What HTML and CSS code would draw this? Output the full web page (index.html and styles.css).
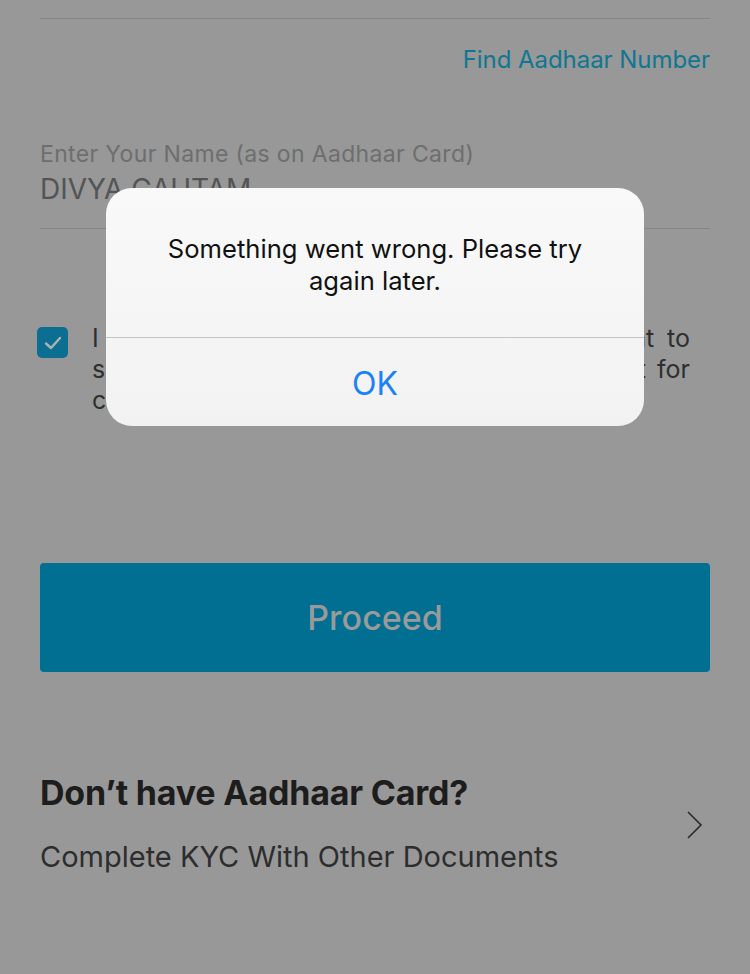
FILE: index.html
```html
<!DOCTYPE html>
<html>
<head>
<meta charset="utf-8">
<link rel="stylesheet" href="styles.css">
</head>
<body>
<div class="page">
  <div class="rule top-rule"></div>
  <div class="find-row"><span class="find-link">Find Aadhaar Number</span></div>
  <div class="field">
    <div class="field-label">Enter Your Name (as on Aadhaar Card)</div>
    <div class="field-value">DIVYA GAUTAM</div>
  </div>
  <div class="rule"></div>
  <div class="consent">
    <div class="checkbox">
      <svg width="20" height="16" viewBox="0 0 20 16"><path d="M3 8.5 L8 13 L17 3" fill="none" stroke="#a9b3b8" stroke-width="2.4" stroke-linecap="round" stroke-linejoin="round"/></svg>
    </div>
    <div class="consent-text">
      <div class="cline">I give Paytm Payments Bank Ltd my consent to</div>
      <div class="cline">share all of my details with UIDAI on request for</div>
      <div class="cline last">completing my KYC.</div>
    </div>
  </div>
  <div class="btn">Proceed</div>
  <div class="alt-row">
    <div class="alt-text">
      <div class="alt-title">Don’t have Aadhaar Card?</div>
      <div class="alt-sub">Complete KYC With Other Documents</div>
    </div>
    <svg class="chev" width="18" height="28" viewBox="0 0 18 28"><path d="M2 1 L15 14 L2 27" fill="none" stroke="#2a2a2a" stroke-width="1.6"/></svg>
  </div>
</div>

<div class="alert">
  <div class="alert-msg">Something went wrong. Please try again later.</div>
  <div class="alert-btn">OK</div>
</div>
</body>
</html>
```
FILE: styles.css
```css
html, body {
  margin: 0;
  padding: 0;
  background: #989898;
  width: 750px;
  height: 974px;
  overflow: hidden;
  font-family: Inter, Roboto, "Liberation Sans", sans-serif;
}
.page {
  padding: 0 40px;
  position: relative;
}
.rule {
  height: 1px;
  background: #868686;
}
.top-rule {
  margin-top: 18px;
}
.find-row {
  display: flex;
  justify-content: flex-end;
  margin-top: 26px;
  height: 30px;
  line-height: 30px;
}
.find-link {
  color: #0f7792;
  font-size: 24px;
  letter-spacing: -0.05px;
}
.field {
  margin-top: 64px;
  height: 89px;
}
.field-label {
  color: #6e6e6e;
  font-size: 23px;
  line-height: 30px;
  letter-spacing: 0.35px;
}
.field-value {
  color: #545454;
  font-size: 28px;
  line-height: 40px;
}
.consent {
  display: flex;
  margin-top: 98px;
  margin-left: -3px;
}
.checkbox {
  width: 31px;
  height: 31px;
  background: #0c6e90;
  border-radius: 5px;
  display: flex;
  align-items: center;
  justify-content: center;
  flex: none;
}
.consent-text {
  margin-left: 24px;
  margin-top: -4px;
  width: 598px;
  color: #2f2f2f;
  font-size: 25px;
  line-height: 31px;
  white-space: nowrap;
}
.cline {
  text-align: justify;
  text-align-last: justify;
}
.cline.last {
  text-align-last: left;
}
.btn {
  margin-top: 147px;
  height: 109px;
  background: #006f91;
  border-radius: 4px;
  display: flex;
  align-items: center;
  justify-content: center;
  color: #9a9a9a;
  font-size: 34px;
  font-weight: 500;
}
.alt-row {
  display: flex;
  align-items: center;
  margin-top: 99px;
}
.alt-text {
  flex: 1;
}
.alt-title {
  color: #1d1d1d;
  font-size: 34px;
  font-weight: 700;
  line-height: 44px;
  letter-spacing: -0.2px;
}
.alt-sub {
  margin-top: 23px;
  color: #2d2d2d;
  font-size: 29px;
  line-height: 38px;
}
.chev {
  margin-right: 6px;
  margin-top: 2px;
}
.alert {
  position: absolute;
  left: 106px;
  top: 188px;
  width: 538px;
  height: 238px;
  border-radius: 26px;
  background: linear-gradient(180deg, #f9f9f9 0%, #f2f2f2 100%);
  display: flex;
  flex-direction: column;
  overflow: hidden;
}
.alert-msg {
  height: 150px;
  box-sizing: border-box;
  padding: 45px 40px 0;
  text-align: center;
  color: #111;
  font-size: 25.6px;
  line-height: 32px;
  border-bottom: 1px solid #c4c5c8;
}
.alert-btn {
  flex: 1;
  display: flex;
  align-items: center;
  justify-content: center;
  color: #1a82f6;
  font-size: 32px;
  padding-top: 2px;
}
```
